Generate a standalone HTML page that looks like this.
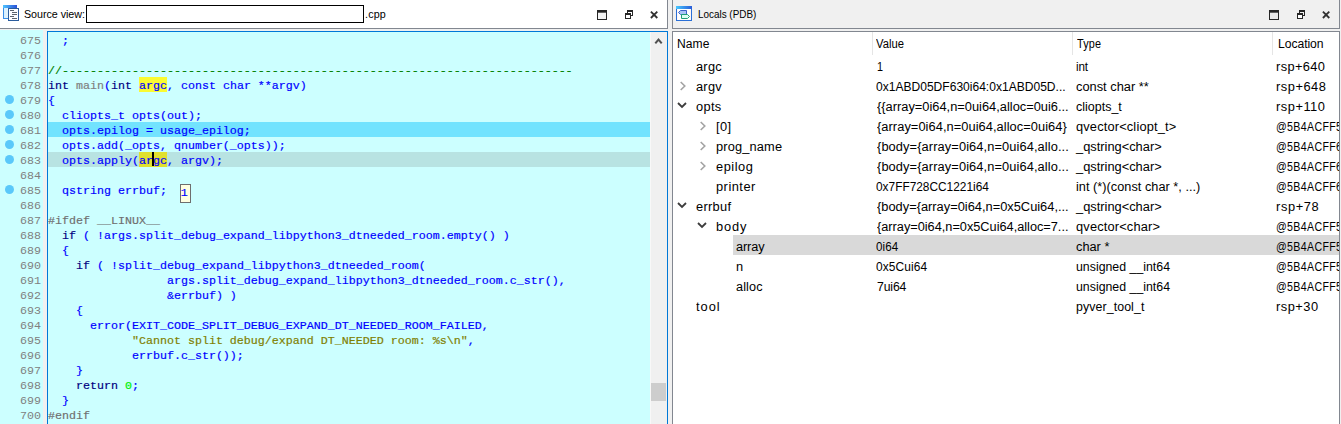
<!DOCTYPE html>
<html><head><meta charset="utf-8"><title>Source view</title>
<style>
html,body{margin:0;padding:0;}
body{width:1341px;height:424px;overflow:hidden;background:#f0f0f0;position:relative;font-family:"Liberation Sans",sans-serif;font-size:12px;color:#000;}
div,span,svg{position:absolute;box-sizing:border-box;}
.t{white-space:pre;line-height:1;}
/* left panel */
#ltitle{left:0;top:0;width:668px;height:29px;background:#fff;border-right:1px solid #828790;border-bottom:1px solid #828790;}
#lbody{left:0;top:30px;width:43px;height:394px;background:#ccffff;}
#lsep{left:47px;top:31px;width:621px;height:400px;background:#ccffff;}
#lframe{left:47px;top:31px;width:621px;height:400px;border:1px solid #0078d7;}
#lscroll{left:650px;top:32px;width:17px;height:392px;background:#f0f0f0;border-left:1px solid #f8f8f8;}
#lthumb{left:651px;top:383px;width:15px;height:18px;background:#cdcdcd;}
.ln{left:0;width:41px;text-align:right;color:#808080;}
.code,.ln{font-family:"Liberation Mono",monospace;font-size:11.667px;height:15px;line-height:15px;white-space:pre;}
.code{left:48px;color:#0000ff;-webkit-text-stroke:0.18px;}
.code span{position:static;}
.k{color:#000080;}.g{color:#808080;}.c{color:#008000;}.p{color:#707070;}.s{color:#808000;}.n{color:#00f000;}
.hy,.hy2{}
.dot{left:5px;width:9px;height:9px;border-radius:50%;background:#5ac8fa;}
.hl{left:48px;width:602px;height:15px;}
/* right panel */
#rtitle{left:672px;top:0;width:668px;height:29px;background:#f0f0f0;border:1px solid #828790;border-top:none;}
#rbody{left:672px;top:31px;width:668px;height:400px;background:#fff;border:1px solid #828790;}
.hsep{top:32px;width:1px;height:23px;background:#e5e5e5;}
.r{height:20px;line-height:20px;white-space:pre;font-size:12px;transform-origin:0 0;}
.tt{font-size:11px;}
</style></head><body>

<div id="ltitle"></div>
<svg style="left:3px;top:5px" width="17" height="17" viewBox="0 0 17 17">
<defs><linearGradient id="ga" x1="0" y1="0" x2="1" y2="0"><stop offset="0" stop-color="#4fc4ff"/><stop offset="1" stop-color="#2a50d8"/></linearGradient>
<linearGradient id="gb" x1="0" y1="0" x2="1" y2="0"><stop offset="0" stop-color="#d4efff"/><stop offset="1" stop-color="#ffffff"/></linearGradient></defs>
<rect x="0.5" y="0.5" width="13" height="13" fill="url(#gb)" stroke="#3a8ee8"/>
<rect x="0" y="0" width="14" height="3" fill="url(#ga)"/>
<rect x="5.5" y="3.5" width="10" height="12" fill="#fbfdff" stroke="#2b5c9c"/>
<path d="M7 5.5h4M9 7.5h5M9 9.5h5M7 11.5h4M9 13.5h5" stroke="#5a636c" stroke-width="1" fill="none"/>
</svg>
<div class="r tt" style="left:24.1px;top:4px;transform:scaleX(0.9758);letter-spacing:-0.047px;">Source view:</div>
<div style="left:86px;top:5px;width:278px;height:18px;border:1px solid #000;background:#fff"></div>
<div class="r tt" style="left:365.0px;top:4px;transform:scaleX(0.975);letter-spacing:0.171px;">.cpp</div>
<svg style="left:597px;top:10px" width="10" height="10" viewBox="0 0 10 10"><rect x="0.5" y="0.5" width="9" height="9" fill="#f4f4f4" stroke="#262626"/><rect x="0" y="0" width="10" height="2.7" fill="#262626"/></svg><svg style="left:625px;top:10px" width="8" height="9" viewBox="0 0 8 9"><rect x="2.5" y="0.5" width="5" height="5" fill="none" stroke="#262626"/><rect x="2" y="0" width="6" height="2" fill="#262626"/><rect x="0.5" y="3.5" width="5" height="5" fill="#fff" stroke="#262626"/><rect x="0" y="3" width="6" height="2" fill="#262626"/></svg><svg style="left:649px;top:10px" width="11" height="10" viewBox="0 0 11 10"><path d="M1.9 1.6L8.3 8M8.3 1.6L1.9 8" stroke="#303030" stroke-width="1.8" fill="none"/></svg>
<div id="lbody"></div><div id="lsep"></div>
<div class="hl" style="top:122px;background:#72e3fe"></div>
<div class="hl" style="top:152px;background:#b8e3e2"></div>
<div style="left:139px;top:77px;width:28px;height:15px;background:#fafa32"></div>
<div style="left:139px;top:152px;width:28px;height:15px;background:#e0e030"></div>
<div class="ln" style="top:34px">675</div>
<div class="code" style="top:34px"><span class="b">  ;</span></div>
<div class="ln" style="top:49px">676</div>
<div class="ln" style="top:64px">677</div>
<div class="code" style="top:64px"><span class="c">//-------------------------------------------------------------------------</span></div>
<div class="ln" style="top:79px">678</div>
<div class="code" style="top:79px"><span class="k">int </span><span class="g">main</span><span class="b">(</span><span class="k">int </span><span class="hy">argc</span><span class="b">, const char **argv)</span></div>
<div class="ln" style="top:94px">679</div>
<div class="dot" style="top:95px"></div>
<div class="code" style="top:94px"><span class="b">{</span></div>
<div class="ln" style="top:109px">680</div>
<div class="dot" style="top:110px"></div>
<div class="code" style="top:109px"><span class="b">  cliopts_t opts(out);</span></div>
<div class="ln" style="top:124px">681</div>
<div class="dot" style="top:125px"></div>
<div class="code" style="top:124px"><span class="b">  opts.epilog = usage_epilog;</span></div>
<div class="ln" style="top:139px">682</div>
<div class="dot" style="top:140px"></div>
<div class="code" style="top:139px"><span class="b">  opts.add(_opts, qnumber(_opts));</span></div>
<div class="ln" style="top:154px">683</div>
<div class="dot" style="top:155px"></div>
<div class="code" style="top:154px"><span class="b">  opts.apply(</span><span class="hy2">argc</span><span class="b">, argv);</span></div>
<div class="ln" style="top:169px">684</div>
<div class="ln" style="top:184px">685</div>
<div class="dot" style="top:185px"></div>
<div class="code" style="top:184px"><span class="b">  qstring errbuf;</span></div>
<div class="ln" style="top:199px">686</div>
<div class="ln" style="top:214px">687</div>
<div class="code" style="top:214px"><span class="p">#ifdef __LINUX__</span></div>
<div class="ln" style="top:229px">688</div>
<div class="code" style="top:229px"><span class="k">  if</span><span class="b"> ( !args.split_debug_expand_libpython3_dtneeded_room.empty() )</span></div>
<div class="ln" style="top:244px">689</div>
<div class="code" style="top:244px"><span class="b">  {</span></div>
<div class="ln" style="top:259px">690</div>
<div class="code" style="top:259px"><span class="k">    if</span><span class="b"> ( !split_debug_expand_libpython3_dtneeded_room(</span></div>
<div class="ln" style="top:274px">691</div>
<div class="code" style="top:274px"><span class="b">                 args.split_debug_expand_libpython3_dtneeded_room.c_str(),</span></div>
<div class="ln" style="top:289px">692</div>
<div class="code" style="top:289px"><span class="b">                 &amp;errbuf) )</span></div>
<div class="ln" style="top:304px">693</div>
<div class="code" style="top:304px"><span class="b">    {</span></div>
<div class="ln" style="top:319px">694</div>
<div class="code" style="top:319px"><span class="b">      error(EXIT_CODE_SPLIT_DEBUG_EXPAND_DT_NEEDED_ROOM_FAILED,</span></div>
<div class="ln" style="top:334px">695</div>
<div class="code" style="top:334px"><span class="s">            "Cannot split debug/expand DT_NEEDED room: %s\n"</span><span class="b">,</span></div>
<div class="ln" style="top:349px">696</div>
<div class="code" style="top:349px"><span class="b">            errbuf.c_str());</span></div>
<div class="ln" style="top:364px">697</div>
<div class="code" style="top:364px"><span class="b">    }</span></div>
<div class="ln" style="top:379px">698</div>
<div class="code" style="top:379px"><span class="k">    return </span><span class="n">0</span><span class="b">;</span></div>
<div class="ln" style="top:394px">699</div>
<div class="code" style="top:394px"><span class="b">  }</span></div>
<div class="ln" style="top:409px">700</div>
<div class="code" style="top:409px"><span class="p">#endif</span></div>
<div style="left:152px;top:152px;width:2px;height:14px;background:#000"></div>
<div style="left:180px;top:184px;width:11px;height:19px;background:#ffffe1;border:1px solid #6e6e6e"></div>
<div class="code" style="left:180.8px;top:186px;color:#0000ff">1</div>
<div id="lscroll"></div><div id="lthumb"></div>
<svg style="left:653px;top:36px" width="11" height="10" viewBox="0 0 11 10"><path d="M2.3 7.4L5.5 3.6L8.7 7.4" stroke="#505050" stroke-width="2" fill="none"/></svg>
<div id="lframe"></div>
<div id="rtitle"></div>
<svg style="left:676px;top:6px" width="17" height="16" viewBox="0 0 17 16">
<defs><linearGradient id="gc" x1="0" y1="0" x2="1" y2="0"><stop offset="0" stop-color="#46c8ff"/><stop offset="1" stop-color="#2a5cd8"/></linearGradient></defs>
<rect x="0.5" y="0.5" width="15" height="14" fill="#fff6f6" stroke="#2a6fd6"/>
<rect x="2" y="3" width="12" height="11" fill="#ffffff"/>
<rect x="0" y="0" width="16" height="3" fill="url(#gc)"/>
<path d="M4.5 4.5H10.5V8.5H4.5L2.5 6.5Z" fill="#a9c4f6" stroke="#3a62c8"/>
<path d="M5.5 8.5H11.5L13.5 10.5L11.5 12.5H5.5Z" fill="#dcfff2" stroke="#1fa078"/>
</svg>
<div class="r tt" style="left:697.7px;top:4px;transform:scaleX(0.9);">Locals (PDB)</div>
<svg style="left:1269px;top:10px" width="10" height="10" viewBox="0 0 10 10"><rect x="0.5" y="0.5" width="9" height="9" fill="#e9e9e9" stroke="#262626"/><rect x="0" y="0" width="10" height="2.7" fill="#262626"/></svg><svg style="left:1297px;top:10px" width="8" height="9" viewBox="0 0 8 9"><rect x="2.5" y="0.5" width="5" height="5" fill="none" stroke="#262626"/><rect x="2" y="0" width="6" height="2" fill="#262626"/><rect x="0.5" y="3.5" width="5" height="5" fill="#fff" stroke="#262626"/><rect x="0" y="3" width="6" height="2" fill="#262626"/></svg><svg style="left:1321px;top:10px" width="11" height="10" viewBox="0 0 11 10"><path d="M1.9 1.6L8.3 8M8.3 1.6L1.9 8" stroke="#303030" stroke-width="1.8" fill="none"/></svg>
<div id="rbody"></div>
<div class="r" style="left:677.3px;top:34px;transform:scaleX(1.0065);letter-spacing:0.066px;">Name</div>
<div class="r" style="left:876.3px;top:34px;transform:scaleX(0.9367);">Value</div>
<div class="r" style="left:1077.0px;top:34px;transform:scaleX(0.9038);letter-spacing:0.184px;">Type</div>
<div class="r" style="left:1277.5px;top:34px;transform:scaleX(1.0136);letter-spacing:-0.056px;">Location</div>
<div class="hsep" style="left:872px"></div>
<div class="hsep" style="left:1072px"></div>
<div class="hsep" style="left:1272px"></div>
<div style="left:733px;top:235px;width:606px;height:20px;background:#d9d9d9"></div>
<div class="r" style="left:695.8px;top:57px;transform:scaleX(1.07);letter-spacing:0.218px;">argc</div>
<div class="r" style="left:877.0px;top:57px;transform:scaleX(0.9);">1</div>
<div class="r" style="left:1076.3px;top:57px;transform:scaleX(0.9769);letter-spacing:-0.154px;">int</div>
<div class="r" style="left:1275.8px;top:57px;transform:scaleX(1.07);letter-spacing:0.327px;">rsp+640</div>
<svg style="left:678.5px;top:81px" width="8" height="10" viewBox="0 0 8 10"><path d="M1.7 1L5.8 5L1.7 9" stroke="#a3a3a3" stroke-width="1.6" fill="none"/></svg>
<div class="r" style="left:695.8px;top:77px;transform:scaleX(1.07);letter-spacing:0.218px;">argv</div>
<div class="r" style="left:876.3px;top:77px;transform:scaleX(1.0043);">0x1ABD05DF630i64:0x1ABD05D...</div>
<div class="r" style="left:1076.3px;top:77px;transform:scaleX(1.07);">const char **</div>
<div class="r" style="left:1275.8px;top:77px;transform:scaleX(1.07);letter-spacing:0.483px;">rsp+648</div>
<svg style="left:677px;top:102px" width="10" height="7" viewBox="0 0 10 7"><path d="M1 1L5 5L9 1" stroke="#3c3c3c" stroke-width="1.8" fill="none"/></svg>
<div class="r" style="left:696.0px;top:97px;transform:scaleX(1.07);letter-spacing:0.28px;">opts</div>
<div class="r" style="left:876.5px;top:97px;transform:scaleX(1.07);">{{array=0i64,n=0ui64,alloc=0ui6...</div>
<div class="r" style="left:1076.3px;top:97px;transform:scaleX(1.0409);">cliopts_t</div>
<div class="r" style="left:1275.8px;top:97px;transform:scaleX(1.07);letter-spacing:0.483px;">rsp+110</div>
<svg style="left:698.5px;top:121px" width="8" height="10" viewBox="0 0 8 10"><path d="M1.7 1L5.8 5L1.7 9" stroke="#a3a3a3" stroke-width="1.6" fill="none"/></svg>
<div class="r" style="left:716.1px;top:117px;transform:scaleX(1.07);letter-spacing:0.421px;">[0]</div>
<div class="r" style="left:876.5px;top:117px;transform:scaleX(1.07);letter-spacing:0.048px;">{array=0i64,n=0ui64,alloc=0ui64}</div>
<div class="r" style="left:1076.3px;top:117px;transform:scaleX(1.07);letter-spacing:0.14px;">qvector&lt;cliopt_t&gt;</div>
<div style="left:1272px;top:116px;width:67px;height:20px;overflow:hidden"><div class="r" style="left:4.2px;top:1px;transform:scaleX(0.885);letter-spacing:0.37px">@5B4ACFF5B8</div></div>
<svg style="left:698.5px;top:141px" width="8" height="10" viewBox="0 0 8 10"><path d="M1.7 1L5.8 5L1.7 9" stroke="#a3a3a3" stroke-width="1.6" fill="none"/></svg>
<div class="r" style="left:716.0px;top:137px;transform:scaleX(1.0689);letter-spacing:0.14px;">prog_name</div>
<div class="r" style="left:876.5px;top:137px;transform:scaleX(1.07);letter-spacing:0.088px;">{body={array=0i64,n=0ui64,allo...</div>
<div class="r" style="left:1076.3px;top:137px;transform:scaleX(1.07);">_qstring&lt;char&gt;</div>
<div style="left:1272px;top:136px;width:67px;height:20px;overflow:hidden"><div class="r" style="left:4.2px;top:1px;transform:scaleX(0.885);letter-spacing:0.37px">@5B4ACFF600</div></div>
<svg style="left:698.5px;top:161px" width="8" height="10" viewBox="0 0 8 10"><path d="M1.7 1L5.8 5L1.7 9" stroke="#a3a3a3" stroke-width="1.6" fill="none"/></svg>
<div class="r" style="left:715.8px;top:157px;transform:scaleX(1.07);letter-spacing:0.467px;">epilog</div>
<div class="r" style="left:876.5px;top:157px;transform:scaleX(1.07);letter-spacing:0.088px;">{body={array=0i64,n=0ui64,allo...</div>
<div class="r" style="left:1076.3px;top:157px;transform:scaleX(1.07);">_qstring&lt;char&gt;</div>
<div style="left:1272px;top:156px;width:67px;height:20px;overflow:hidden"><div class="r" style="left:4.2px;top:1px;transform:scaleX(0.885);letter-spacing:0.37px">@5B4ACFF618</div></div>
<div class="r" style="left:716.2px;top:177px;transform:scaleX(1.07);letter-spacing:0.452px;">printer</div>
<div class="r" style="left:876.3px;top:177px;transform:scaleX(0.9895);">0x7FF728CC1221i64</div>
<div class="r" style="left:1076.3px;top:177px;transform:scaleX(1.0586);letter-spacing:0.03px;">int (*)(const char *, ...)</div>
<div style="left:1272px;top:176px;width:67px;height:20px;overflow:hidden"><div class="r" style="left:4.2px;top:1px;transform:scaleX(0.885);letter-spacing:0.37px">@5B4ACFF630</div></div>
<svg style="left:677px;top:202px" width="10" height="7" viewBox="0 0 10 7"><path d="M1 1L5 5L9 1" stroke="#3c3c3c" stroke-width="1.8" fill="none"/></svg>
<div class="r" style="left:695.9px;top:197px;transform:scaleX(1.07);letter-spacing:0.262px;">errbuf</div>
<div class="r" style="left:876.5px;top:197px;transform:scaleX(1.07);">{body={array=0i64,n=0x5Cui64,...</div>
<div class="r" style="left:1076.3px;top:197px;transform:scaleX(1.07);">_qstring&lt;char&gt;</div>
<div class="r" style="left:1275.8px;top:197px;transform:scaleX(1.07);letter-spacing:0.561px;">rsp+78</div>
<svg style="left:697px;top:222px" width="10" height="7" viewBox="0 0 10 7"><path d="M1 1L5 5L9 1" stroke="#3c3c3c" stroke-width="1.8" fill="none"/></svg>
<div class="r" style="left:716.1px;top:217px;transform:scaleX(1.07);letter-spacing:0.81px;">body</div>
<div class="r" style="left:876.5px;top:217px;transform:scaleX(1.0611);">{array=0i64,n=0x5Cui64,alloc=7...</div>
<div class="r" style="left:1076.3px;top:217px;transform:scaleX(1.07);letter-spacing:0.148px;">qvector&lt;char&gt;</div>
<div style="left:1272px;top:216px;width:67px;height:20px;overflow:hidden"><div class="r" style="left:4.2px;top:1px;transform:scaleX(0.885);letter-spacing:0.37px">@5B4ACFF578</div></div>
<div class="r" style="left:736.1px;top:237px;transform:scaleX(1.0593);letter-spacing:-0.094px;">array</div>
<div class="r" style="left:876.3px;top:237px;transform:scaleX(0.9652);letter-spacing:0.069px;">0i64</div>
<div class="r" style="left:1076.3px;top:237px;transform:scaleX(1.0645);">char *</div>
<div style="left:1272px;top:236px;width:67px;height:20px;overflow:hidden"><div class="r" style="left:4.2px;top:1px;transform:scaleX(0.885);letter-spacing:0.37px">@5B4ACFF578</div></div>
<div class="r" style="left:736.3px;top:257px;transform:scaleX(1.07);">n</div>
<div class="r" style="left:876.3px;top:257px;transform:scaleX(0.9941);letter-spacing:0.101px;">0x5Cui64</div>
<div class="r" style="left:1076.3px;top:257px;transform:scaleX(1.0286);">unsigned __int64</div>
<div style="left:1272px;top:256px;width:67px;height:20px;overflow:hidden"><div class="r" style="left:4.2px;top:1px;transform:scaleX(0.885);letter-spacing:0.37px">@5B4ACFF580</div></div>
<div class="r" style="left:736.1px;top:277px;transform:scaleX(1.056);letter-spacing:0.095px;">alloc</div>
<div class="r" style="left:876.5px;top:277px;transform:scaleX(1.0172);letter-spacing:-0.123px;">7ui64</div>
<div class="r" style="left:1076.3px;top:277px;transform:scaleX(1.0286);">unsigned __int64</div>
<div style="left:1272px;top:276px;width:67px;height:20px;overflow:hidden"><div class="r" style="left:4.2px;top:1px;transform:scaleX(0.885);letter-spacing:0.37px">@5B4ACFF588</div></div>
<div class="r" style="left:695.8px;top:297px;transform:scaleX(1.07);letter-spacing:0.903px;">tool</div>
<div class="r" style="left:1076.3px;top:297px;transform:scaleX(1.0303);letter-spacing:0.088px;">pyver_tool_t</div>
<div class="r" style="left:1275.8px;top:297px;transform:scaleX(1.07);letter-spacing:0.449px;">rsp+30</div>
</body></html>
